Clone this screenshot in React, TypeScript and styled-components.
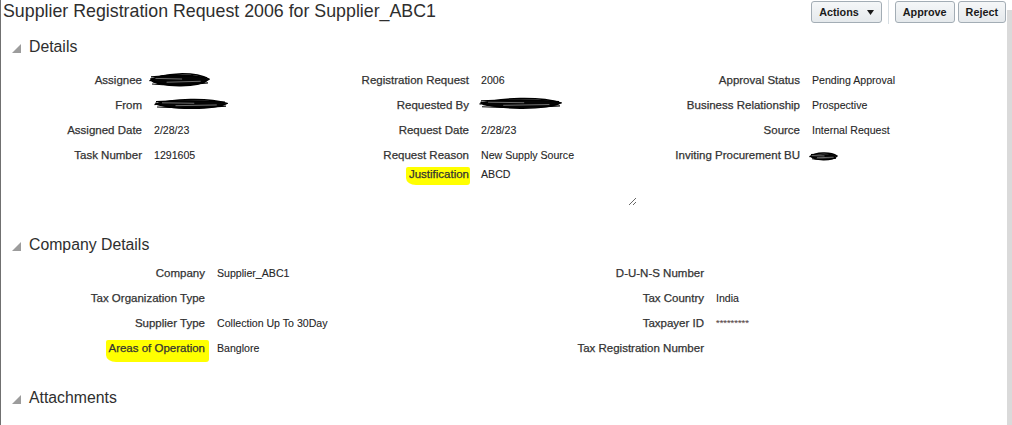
import React from "react";
import styled, { createGlobalStyle } from "styled-components";

const GlobalStyle = createGlobalStyle`
  html, body {
    margin: 0;
    padding: 0;
    background: #fff;
    overflow: hidden;
  }
  body {
    font-family: "Liberation Sans", Arial, sans-serif;
    color: #333;
  }
`;

const Page = styled.div`
  display: flex;
  width: 1012px;
  height: 425px;
  box-sizing: border-box;
  border-left: 1px solid #707070;
  overflow: hidden;
`;

const Content = styled.main`
  flex: 1;
  min-width: 0;
`;

const ScrollTrack = styled.div`
  flex: none;
  width: 5px;
  margin-top: 10px;
  background: #dadada;
`;

const TopBar = styled.header`
  display: flex;
  justify-content: space-between;
  align-items: flex-start;
  height: 24px;
  padding: 0 1px 0 2px;
`;

const Title = styled.h1`
  margin: 0;
  font-size: 17.8px;
  line-height: 22px;
  font-weight: normal;
  color: #2e2e2e;
  white-space: nowrap;
`;

const Toolbar = styled.div`
  display: flex;
  align-items: flex-start;
  height: 24px;
`;

const Button = styled.button`
  display: inline-flex;
  align-items: center;
  gap: 8px;
  height: 22px;
  margin-top: 1px;
  padding: 0 7px;
  border: 1px solid #a3adb5;
  border-radius: 3px;
  background: linear-gradient(#f5f7f8, #e5e9ec);
  font-family: inherit;
  font-size: 10.8px;
  font-weight: bold;
  color: #1a1a1a;

  & + & {
    margin-left: 3px;
  }
`;

const Separator = styled.span`
  width: 1px;
  height: 24px;
  margin: 0 6px;
  background: #d6dde2;
`;

const SectionHeader = styled.h2<{ $top: number }>`
  display: flex;
  align-items: flex-start;
  gap: 8px;
  margin: ${(p) => p.$top}px 0 0;
  padding-left: 11px;
  font-size: 15.8px;
  line-height: 20px;
  font-weight: normal;
  color: #2e2e2e;
`;

const Disclosure = styled.svg`
  flex: none;
  margin-top: 7px;
`;

const Form = styled.div<{ $top: number }>`
  display: flex;
  margin-top: ${(p) => p.$top}px;
`;

const FormColumn = styled.div<{ $width?: number; $labelWidth: number }>`
  display: grid;
  grid-template-columns: ${(p) => p.$labelWidth}px 1fr;
  align-content: start;
  flex: ${(p) => (p.$width ? "none" : "1")};
  width: ${(p) => (p.$width ? `${p.$width}px` : "auto")};
`;

const Label = styled.div<{ $flush?: boolean }>`
  padding: ${(p) => (p.$flush ? "0 12px 0 0" : "6px 12px 5px 0")};
  text-align: right;
  font-size: 11.5px;
  line-height: 14px;
  color: #333;
  -webkit-text-stroke: 0.25px #333;
  white-space: nowrap;
`;

const Value = styled.div<{ $flush?: boolean }>`
  padding: ${(p) => (p.$flush ? "0" : "6px 0 5px")};
  font-size: 10.6px;
  line-height: 14px;
  color: #262626;
  -webkit-text-stroke: 0.1px #262626;
  white-space: nowrap;
`;

const Masked = styled.span`
  font-size: 9.4px;
  color: #6a4f4f;
  vertical-align: 1px;
`;

const Highlight = styled.span<{ $tall?: boolean }>`
  position: relative;
  z-index: 0;

  &::before {
    content: "";
    position: absolute;
    z-index: -1;
    top: ${(p) => (p.$tall ? "-2px" : "-1.5px")};
    bottom: ${(p) => (p.$tall ? "-8px" : "-5px")};
    left: ${(p) => (p.$tall ? "-2px" : "-3px")};
    right: ${(p) => (p.$tall ? "-4px" : "-1px")};
    background: #ffff00;
    border-radius: 2px 2px 3px 10px / 2px 2px 3px 7px;
  }
`;

const NoteArea = styled.textarea`
  display: block;
  box-sizing: border-box;
  width: 158px;
  height: 39px;
  margin-left: -2px;
  padding: 0 2px;
  border: none;
  outline: none;
  background: transparent;
  font-family: inherit;
  font-size: 10.6px;
  line-height: 14px;
  color: #262626;
  resize: both;
  overflow: hidden;
`;

const Scribble = styled.svg<{ $dx: number; $dy: number; $h: number }>`
  display: block;
  margin-left: ${(p) => p.$dx}px;
  margin-top: ${(p) => p.$dy}px;
  margin-bottom: ${(p) => 14 - p.$h - p.$dy}px;
`;

const Redaction = ({ w, h, dx = 0, dy = 0 }: { w: number; h: number; dx?: number; dy?: number }) => (
  <Scribble width={w} height={h} viewBox={`0 0 ${w} ${h}`} $dx={dx} $dy={dy} $h={h}>
    <ellipse cx={w / 2} cy={h / 2} rx={w / 2 - 2.5} ry={h / 2 - 2.2} fill="#050505" />
    <path
      d={`M1.5 ${h * 0.55} C ${w * 0.25} ${h * 0.02}, ${w * 0.75} ${-h * 0.04}, ${w - 1} ${h * 0.45} C ${w * 0.8} ${h * 1.02}, ${w * 0.2} ${h * 0.98}, 2.5 ${h * 0.4}`}
      fill="none"
      stroke="#000"
      strokeWidth={1.5}
    />
    <path
      d={`M3 ${h * 0.3} C ${w * 0.3} ${h * 0.2}, ${w * 0.7} ${h * 0.25}, ${w - 3} ${h * 0.35} M4 ${h * 0.75} C ${w * 0.35} ${h * 0.85}, ${w * 0.7} ${h * 0.8}, ${w - 2} ${h * 0.68}`}
      fill="none"
      stroke="#000"
      strokeWidth={1.2}
    />
    <path
      d={`M${w * 0.12} ${h * 0.4} L ${w * 0.55} ${h * 0.44} M ${w * 0.3} ${h * 0.64} L ${w * 0.85} ${h * 0.58}`}
      stroke="#fff"
      strokeWidth={0.7}
      opacity={0.6}
    />
  </Scribble>
);

const Caret = () => (
  <svg width="7" height="5" viewBox="0 0 7 5">
    <polygon points="0,0 7,0 3.5,5" fill="#1a1a1a" />
  </svg>
);

const Triangle = () => (
  <Disclosure width="9" height="9" viewBox="0 0 9 9">
    <polygon points="9,0 9,9 0,9" fill="#9c9c9c" />
  </Disclosure>
);

type Field = {
  label: string;
  value: React.ReactNode;
  flush?: boolean;
  highlight?: "short" | "tall";
};

const Column = ({ fields, width, labelWidth }: { fields: Field[]; width?: number; labelWidth: number }) => (
  <FormColumn $width={width} $labelWidth={labelWidth}>
    {fields.map((f) => (
      <React.Fragment key={f.label}>
        <Label $flush={f.flush}>
          {f.highlight ? <Highlight $tall={f.highlight === "tall"}>{f.label}</Highlight> : f.label}
        </Label>
        <Value $flush={f.flush}>{f.value}</Value>
      </React.Fragment>
    ))}
  </FormColumn>
);

const detailsCol1: Field[] = [
  { label: "Assignee", value: <Redaction w={62} h={16} dx={-6} dy={-1} /> },
  { label: "From", value: <Redaction w={75} h={12} dx={-1} dy={0} /> },
  { label: "Assigned Date", value: "2/28/23" },
  { label: "Task Number", value: "1291605" },
];

const detailsCol2: Field[] = [
  { label: "Registration Request", value: "2006" },
  { label: "Requested By", value: <Redaction w={84} h={13} dx={-3} dy={-1} /> },
  { label: "Request Date", value: "2/28/23" },
  { label: "Request Reason", value: "New Supply Source" },
  {
    label: "Justification",
    value: <NoteArea readOnly defaultValue="ABCD" />,
    flush: true,
    highlight: "short",
  },
];

const detailsCol3: Field[] = [
  { label: "Approval Status", value: "Pending Approval" },
  { label: "Business Relationship", value: "Prospective" },
  { label: "Source", value: "Internal Request" },
  { label: "Inviting Procurement BU", value: <Redaction w={30} h={9} dx={-4} dy={4} /> },
];

const companyCol1: Field[] = [
  { label: "Company", value: "Supplier_ABC1" },
  { label: "Tax Organization Type", value: "" },
  { label: "Supplier Type", value: "Collection Up To 30Day" },
  { label: "Areas of Operation", value: "Banglore", highlight: "tall" },
];

const companyCol2: Field[] = [
  { label: "D-U-N-S Number", value: "" },
  { label: "Tax Country", value: "India" },
  { label: "Taxpayer ID", value: <Masked>*********</Masked> },
  { label: "Tax Registration Number", value: "" },
];

export default function App() {
  return (
    <>
      <GlobalStyle />
      <Page>
        <Content>
          <TopBar>
            <Title>Supplier Registration Request 2006 for Supplier_ABC1</Title>
            <Toolbar>
              <Button>
                Actions <Caret />
              </Button>
              <Separator />
              <Button>Approve</Button>
              <Button>Reject</Button>
            </Toolbar>
          </TopBar>

          <SectionHeader $top={13}>
            <Triangle />
            Details
          </SectionHeader>
          <Form $top={10}>
            <Column fields={detailsCol1} width={312} labelWidth={153} />
            <Column fields={detailsCol2} width={327} labelWidth={168} />
            <Column fields={detailsCol3} labelWidth={172} />
          </Form>

          <SectionHeader $top={29}>
            <Triangle />
            Company Details
          </SectionHeader>
          <Form $top={5}>
            <Column fields={companyCol1} width={499} labelWidth={216} />
            <Column fields={companyCol2} labelWidth={216} />
          </Form>

          <SectionHeader $top={28}>
            <Triangle />
            Attachments
          </SectionHeader>
        </Content>
        <ScrollTrack />
      </Page>
    </>
  );
}
